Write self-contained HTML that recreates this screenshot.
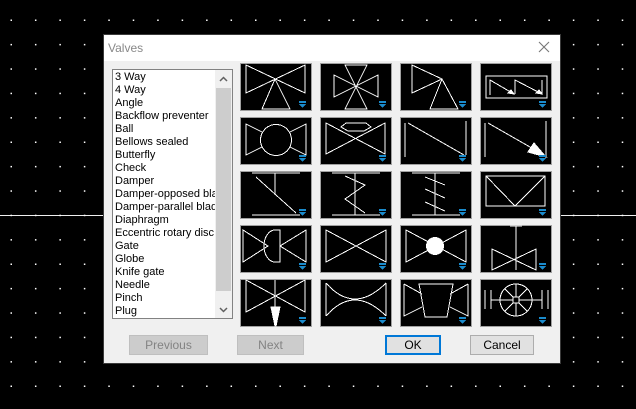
<!DOCTYPE html>
<html><head><style>
*{margin:0;padding:0;box-sizing:border-box}
body{width:636px;height:409px;background:#000;position:relative;overflow:hidden;font-family:"Liberation Sans",Arial,sans-serif}
.abs{position:absolute}
svg{shape-rendering:crispEdges}
#dlg{left:103px;top:34px;width:458px;height:330px;background:#f0f0f0;border:1px solid #3a3a3a}
#title{left:0;top:0;width:456px;height:26px;background:#fff;color:#888;font-size:12px;padding:6px 0 0 4px}
#list{left:8px;top:34px;width:121px;height:250px;background:#fff;border:1px solid #828282;overflow:hidden}
#list div.t{font-size:11px;line-height:13px;padding-left:2px;color:#000;white-space:nowrap}
#sb{position:absolute;right:0;top:0;width:17px;height:248px;background:#f0f0f0}
.tile{position:absolute;width:72px;height:48px;border:1px solid #a0a0a0;background:#000}
.tile svg{position:absolute;left:-1px;top:-1px}
.btn{position:absolute;height:20px;border:1px solid #adadad;background:#e1e1e1;font-size:12px;text-align:center;line-height:18px;color:#000}
.dis{background:#cccccc;border-color:#bfbfbf;color:#838383}
</style></head><body>
<svg class="abs" style="left:0;top:0" width="636" height="409">
<line x1="0" y1="215.5" x2="636" y2="215.5" stroke="#eee" stroke-width="1.3"/>
</svg>
<svg class="abs" style="left:0;top:0" width="636" height="409">
<defs><pattern id="p" x="10" y="19" width="24.45" height="24.4" patternUnits="userSpaceOnUse"><rect x="0.5" y="0.5" width="1.3" height="1.3" fill="#fff"/></pattern></defs>
<rect width="636" height="409" fill="url(#p)"/>
</svg>
<div id="dlg" class="abs">
<div id="title" class="abs">Valves</div>
<svg class="abs" style="left:434px;top:6px;shape-rendering:auto" width="12" height="12"><path d="M1 1L11 11M11 1L1 11" stroke="#777" stroke-width="1.1"/></svg>
<div id="list" class="abs">
<div style="padding-top:1px">
<div class="t">3 Way</div><div class="t">4 Way</div><div class="t">Angle</div><div class="t">Backflow preventer</div><div class="t">Ball</div><div class="t">Bellows sealed</div><div class="t">Butterfly</div><div class="t">Check</div><div class="t">Damper</div><div class="t">Damper-opposed blade</div><div class="t">Damper-parallel blade</div><div class="t">Diaphragm</div><div class="t">Eccentric rotary disc</div><div class="t">Gate</div><div class="t">Globe</div><div class="t">Knife gate</div><div class="t">Needle</div><div class="t">Pinch</div><div class="t">Plug</div>
</div>
<div id="sb">
<svg class="abs" style="left:4px;top:6px;shape-rendering:auto" width="9" height="6"><path d="M1 5L4.5 1.5L8 5" stroke="#606060" stroke-width="1.5" fill="none"/></svg>
<div class="abs" style="left:1px;top:18px;width:15px;height:203px;background:#cdcdcd"></div>
<svg class="abs" style="left:4px;top:237px;shape-rendering:auto" width="9" height="6"><path d="M1 1L4.5 4.5L8 1" stroke="#606060" stroke-width="1.5" fill="none"/></svg>
</div>
</div>
<div class="btn dis" style="left:25px;top:300px;width:79px">Previous</div>
<div class="btn dis" style="left:133px;top:300px;width:67px">Next</div>
<div class="btn" style="left:281px;top:300px;width:56px;border:2px solid #0078d7;line-height:16px">OK</div>
<div class="btn" style="left:366px;top:300px;width:64px">Cancel</div>
</div>

<div class="tile" style="left:240px;top:63px"><svg width="72" height="48" fill="none" stroke="#fff"><path d="M6 2V30L65 2V30L6 2Z M35 16L22 46H50Z"/></svg></div>
<div class="tile" style="left:320px;top:63px"><svg width="72" height="48" fill="none" stroke="#fff"><path d="M14 12V34L58 12V34Z M25 2H47L25 46H47Z"/></svg></div>
<div class="tile" style="left:400px;top:63px"><svg width="72" height="48" fill="none" stroke="#fff"><path d="M12 2V30L42 16Z M42 16L30 46H58Z"/></svg></div>
<div class="tile" style="left:480px;top:63px"><svg width="72" height="48" fill="none" stroke="#fff"><path d="M6 13H67V35H6Z M10 32V17L34 31 M35 31V17L62 31 M62 17V31"/><path d="M34 31L28 30L31 27Z M62 31L56 30L59 27Z" fill="#fff"/></svg></div>

<div class="tile" style="left:240px;top:117px"><svg width="72" height="48" fill="none" stroke="#fff"><circle cx="36" cy="23" r="15.5"/><path d="M22 15L6 7V38L22 30 M50 15L66 7V38L50 30"/></svg></div>
<div class="tile" style="left:320px;top:117px"><svg width="72" height="48" fill="none" stroke="#fff"><path d="M6 6V37L65 6V37Z M26 6L21 10L28 14L44 14L51 10L46 6Z"/></svg></div>
<div class="tile" style="left:400px;top:117px"><svg width="72" height="48" fill="none" stroke="#fff"><path d="M5 6V40 M66 4V38 M8 6L64 38"/></svg></div>
<div class="tile" style="left:480px;top:117px"><svg width="72" height="48" fill="none" stroke="#fff"><path d="M5 6V40 M66 4V40 M8 6L64 38"/><path d="M66 40L48 35L54 26Z" fill="#fff"/></svg></div>

<div class="tile" style="left:240px;top:171px"><svg width="72" height="48" fill="none" stroke="#fff"><path d="M12 2H60 M12 44H60 M35 2V24 M16 6L56 42"/></svg></div>
<div class="tile" style="left:320px;top:171px"><svg width="72" height="48" fill="none" stroke="#fff"><path d="M12 2H60 M12 44H60 M35 2V44 M25 5L45 14L25 28L45 42"/></svg></div>
<div class="tile" style="left:400px;top:171px"><svg width="72" height="48" fill="none" stroke="#fff"><path d="M12 2H60 M12 44H60 M35 2V44 M25 6L45 14 M25 18L45 27 M25 31L45 40"/></svg></div>
<div class="tile" style="left:480px;top:171px"><svg width="72" height="48" fill="none" stroke="#fff"><path d="M6 5H65V35H6Z M6 5L35 35L65 5"/></svg></div>

<div class="tile" style="left:240px;top:225px"><svg width="72" height="48" fill="none" stroke="#fff"><path d="M3 5V37L28 21Z M66 5V37L40 21Z M40 5H35A11 16 0 0 0 35 37H40Z" fill="#000"/></svg></div>
<div class="tile" style="left:320px;top:225px"><svg width="72" height="48" fill="none" stroke="#fff"><path d="M6 5V37L66 5V37Z"/></svg></div>
<div class="tile" style="left:400px;top:225px"><svg width="72" height="48" fill="none" stroke="#fff"><path d="M6 5V37L66 5V37Z"/><circle cx="35" cy="21" r="8.5" fill="#fff"/></svg></div>
<div class="tile" style="left:480px;top:225px"><svg width="72" height="48" fill="none" stroke="#fff"><path d="M30 1H42 M36 1V45 M12 24V45L56 24V45Z"/></svg></div>

<div class="tile" style="left:240px;top:279px"><svg width="72" height="48" fill="none" stroke="#fff"><path d="M6 1V33L65 1V33Z M35 1V46"/><path d="M31 28H40L36 47H35Z" fill="#fff"/></svg></div>
<div class="tile" style="left:320px;top:279px"><svg width="72" height="48" fill="none" stroke="#fff"><path d="M6 4V37 M66 4V37 M6 4Q20 20 35 20Q50 20 66 4 M6 37Q20 21 35 21Q50 21 66 37"/></svg></div>
<div class="tile" style="left:400px;top:279px"><svg width="72" height="48" fill="none" stroke="#fff"><path d="M4 5V37L22 28 M22 15L4 5 M68 5V37L50 28 M50 15L68 5 M19 5H53L47 38H25Z"/></svg></div>
<div class="tile" style="left:480px;top:279px"><svg width="72" height="48" fill="none" stroke="#fff"><path d="M5 11V30 M11 11V30 M62 11V30 M68 11V30 M11 21H62"/><circle cx="36" cy="21" r="16"/><path d="M36 5V37 M20 21H52 M25 10L47 32 M47 10L25 32"/><rect x="33" y="18" width="6" height="6" fill="#000"/></svg></div>

<svg class="abs" style="left:0;top:0" width="636" height="409">
<defs><g id="m"><path d="M0 0H7V2H0Z M0 3H7L3.5 7Z" fill="#1a8bcc"/></g></defs>
<use href="#m" x="299" y="101"/><use href="#m" x="379" y="101"/><use href="#m" x="459" y="101"/><use href="#m" x="539" y="101"/>
<use href="#m" x="299" y="155"/><use href="#m" x="379" y="155"/><use href="#m" x="459" y="155"/><use href="#m" x="539" y="155"/>
<use href="#m" x="299" y="209"/><use href="#m" x="379" y="209"/><use href="#m" x="459" y="209"/><use href="#m" x="539" y="209"/>
<use href="#m" x="299" y="263"/><use href="#m" x="379" y="263"/><use href="#m" x="459" y="263"/><use href="#m" x="539" y="263"/>
<use href="#m" x="299" y="317"/><use href="#m" x="379" y="317"/><use href="#m" x="459" y="317"/><use href="#m" x="539" y="317"/>
</svg>
</body></html>
